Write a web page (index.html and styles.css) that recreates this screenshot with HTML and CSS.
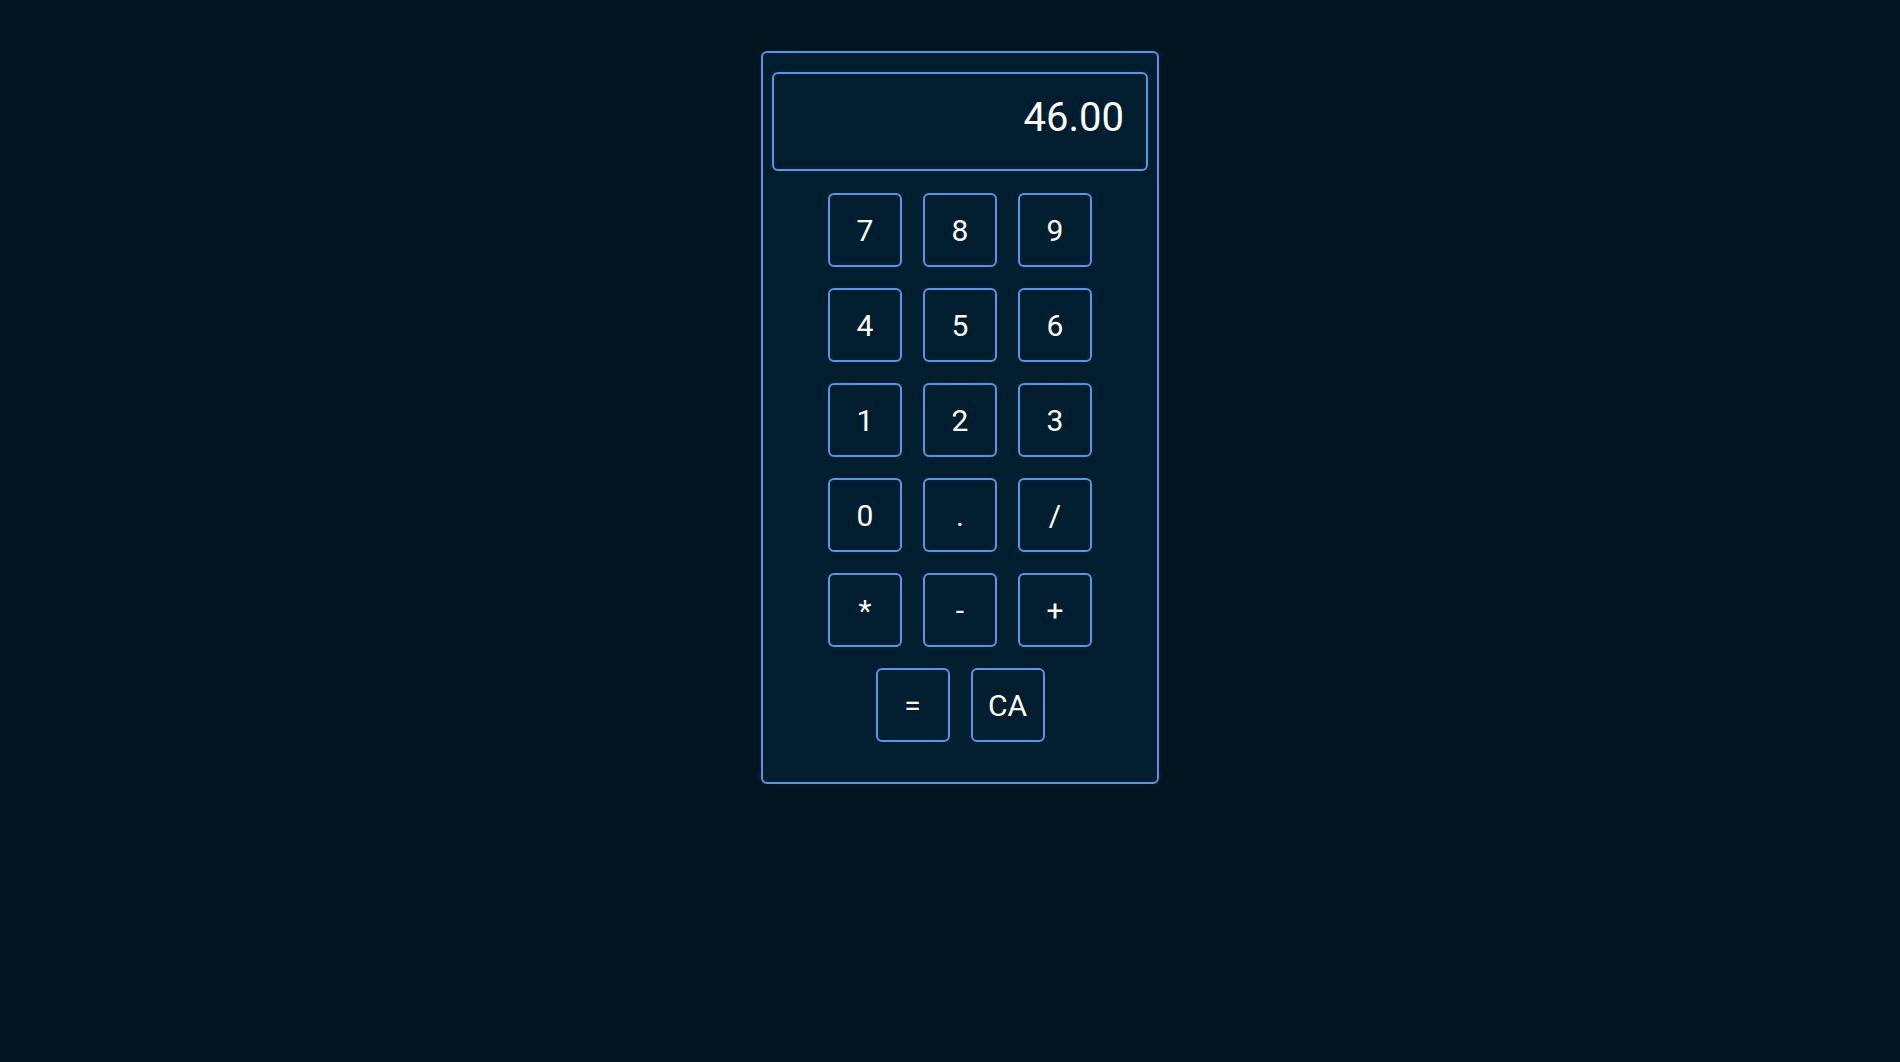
FILE: index.html
```html
<!DOCTYPE html>
<html lang="en">
<head>
    <meta charset="UTF-8">
    <meta name="viewport" content="width=device-width, initial-scale=1.0">
    <title>Calculator</title>
    <link rel="stylesheet" href="styles.css">
</head>
<body>
    <div class="calculator">
        <div class="display" id="display">46.00</div>
        <div class="keys">
            <div class="row">
                <button class="key">7</button>
                <button class="key">8</button>
                <button class="key">9</button>
            </div>
            <div class="row">
                <button class="key">4</button>
                <button class="key">5</button>
                <button class="key">6</button>
            </div>
            <div class="row">
                <button class="key">1</button>
                <button class="key">2</button>
                <button class="key">3</button>
            </div>
            <div class="row">
                <button class="key">0</button>
                <button class="key">.</button>
                <button class="key">/</button>
            </div>
            <div class="row">
                <button class="key">*</button>
                <button class="key">-</button>
                <button class="key">+</button>
            </div>
            <div class="row">
                <button class="key">=</button>
                <button class="key">CA</button>
            </div>
        </div>
    </div>
</body>
</html>
```

FILE: styles.css
```css
body {
    background-color: #011521;
    margin: 0;
    padding: 0 0 0 20px;
    font-family: Roboto, "Liberation Sans", sans-serif;
    color: white;
}
.calculator {
    width: 376px;
    margin: 51px auto 0;
    padding: 19px 9px 40px;
    background-color: #011e2f;
    border: 2px solid #5595ee;
    border-radius: 6px;
}
.display {
    box-sizing: border-box;
    height: 99px;
    border: 2px solid #5595ee;
    border-radius: 6px;
    display: flex;
    align-items: center;
    justify-content: flex-end;
    padding: 0 22px 8px;
    font-size: 40px;
    margin-bottom: 22px;
}
.keys {
    display: flex;
    flex-direction: column;
    gap: 21px;
}
.row {
    display: flex;
    justify-content: center;
    gap: 21px;
}
.key {
    box-sizing: border-box;
    width: 74px;
    height: 74px;
    background-color: #011e2f;
    border: 2px solid #5595ee;
    border-radius: 6px;
    color: white;
    font-family: Roboto, "Liberation Sans", sans-serif;
    font-size: 30px;
    padding: 0;
    cursor: pointer;
}
```
